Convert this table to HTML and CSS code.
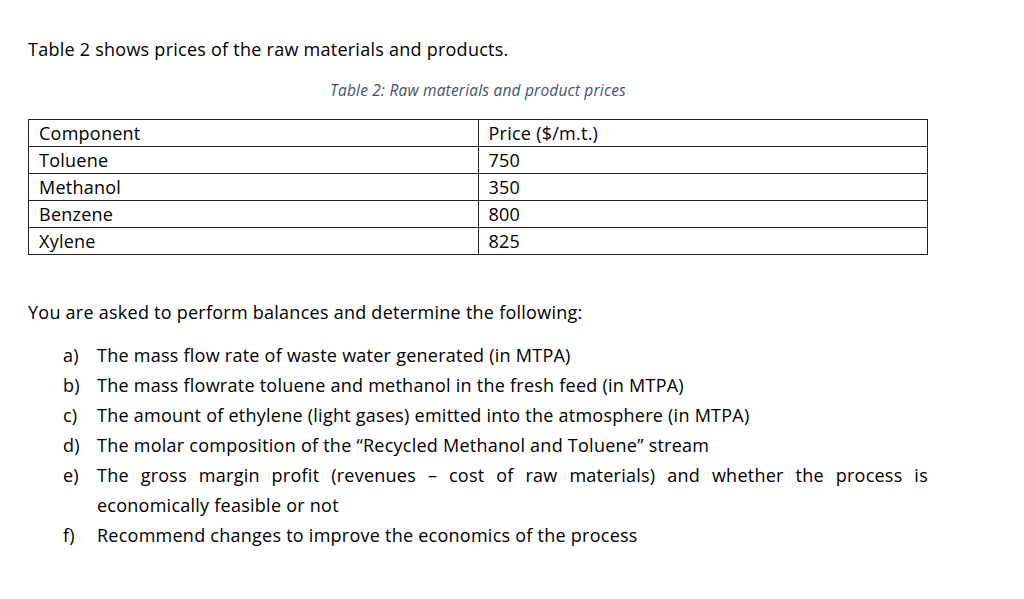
FILE: index.html
```html
<!DOCTYPE html>
<html>
<head>
<meta charset="utf-8">
<link rel="stylesheet" href="styles.css">
</head>
<body>
<div class="page">
  <p class="intro">Table 2 shows prices of the raw materials and products.</p>
  <p class="caption">Table 2: Raw materials and product prices</p>
  <table class="prices">
    <tr><td>Component</td><td>Price ($/m.t.)</td></tr>
    <tr><td>Toluene</td><td>750</td></tr>
    <tr><td>Methanol</td><td>350</td></tr>
    <tr><td>Benzene</td><td>800</td></tr>
    <tr><td>Xylene</td><td>825</td></tr>
  </table>
  <p class="ask">You are asked to perform balances and determine the following:</p>
  <ol class="tasks">
    <li><span class="mark">a)</span><span class="txt">The mass flow rate of waste water generated (in MTPA)</span></li>
    <li><span class="mark">b)</span><span class="txt">The mass flowrate toluene and methanol in the fresh feed (in MTPA)</span></li>
    <li><span class="mark">c)</span><span class="txt">The amount of ethylene (light gases) emitted into the atmosphere (in MTPA)</span></li>
    <li><span class="mark">d)</span><span class="txt">The molar composition of the “Recycled Methanol and Toluene” stream</span></li>
    <li><span class="mark">e)</span><span class="txt just">The gross margin profit (revenues – cost of raw materials) and whether the process is economically feasible or not</span></li>
    <li><span class="mark">f)</span><span class="txt">Recommend changes to improve the economics of the process</span></li>
  </ol>
</div>
</body>
</html>
```
FILE: styles.css
```css
html, body {
  margin: 0;
  padding: 0;
  background: #fff;
}
.page {
  font-family: "Open Sans", "Liberation Sans", sans-serif;
  color: #000;
  font-size: 18px;
  letter-spacing: 0.25px;
  padding: 36px 0 0 28px;
  width: 900px;
}
.intro {
  margin: 0;
  line-height: 26px;
}
.caption {
  margin: 19px 0 0;
  font-style: italic;
  font-size: 15.5px;
  letter-spacing: 0.2px;
  color: #44546a;
  text-align: center;
  line-height: 18px;
  width: 900px;
}
.prices {
  margin-top: 20px;
  width: 900px;
  border-collapse: collapse;
  border: 1px solid #555;
}
.prices td {
  border: 1px solid #222;
  height: 26px;
  padding: 0 10px;
  line-height: 26px;
  width: 50%;
  box-sizing: border-box;
}
.ask {
  margin: 44px 0 0;
  line-height: 26px;
}
.tasks {
  list-style: none;
  margin: 15px 0 0;
  padding: 0 0 0 35px;
  width: 865px;
}
.tasks li {
  display: flex;
  line-height: 30px;
}
.mark {
  width: 34px;
  flex: none;
}
.txt {
  flex: 1;
}
.just {
  text-align: justify;
}
```
